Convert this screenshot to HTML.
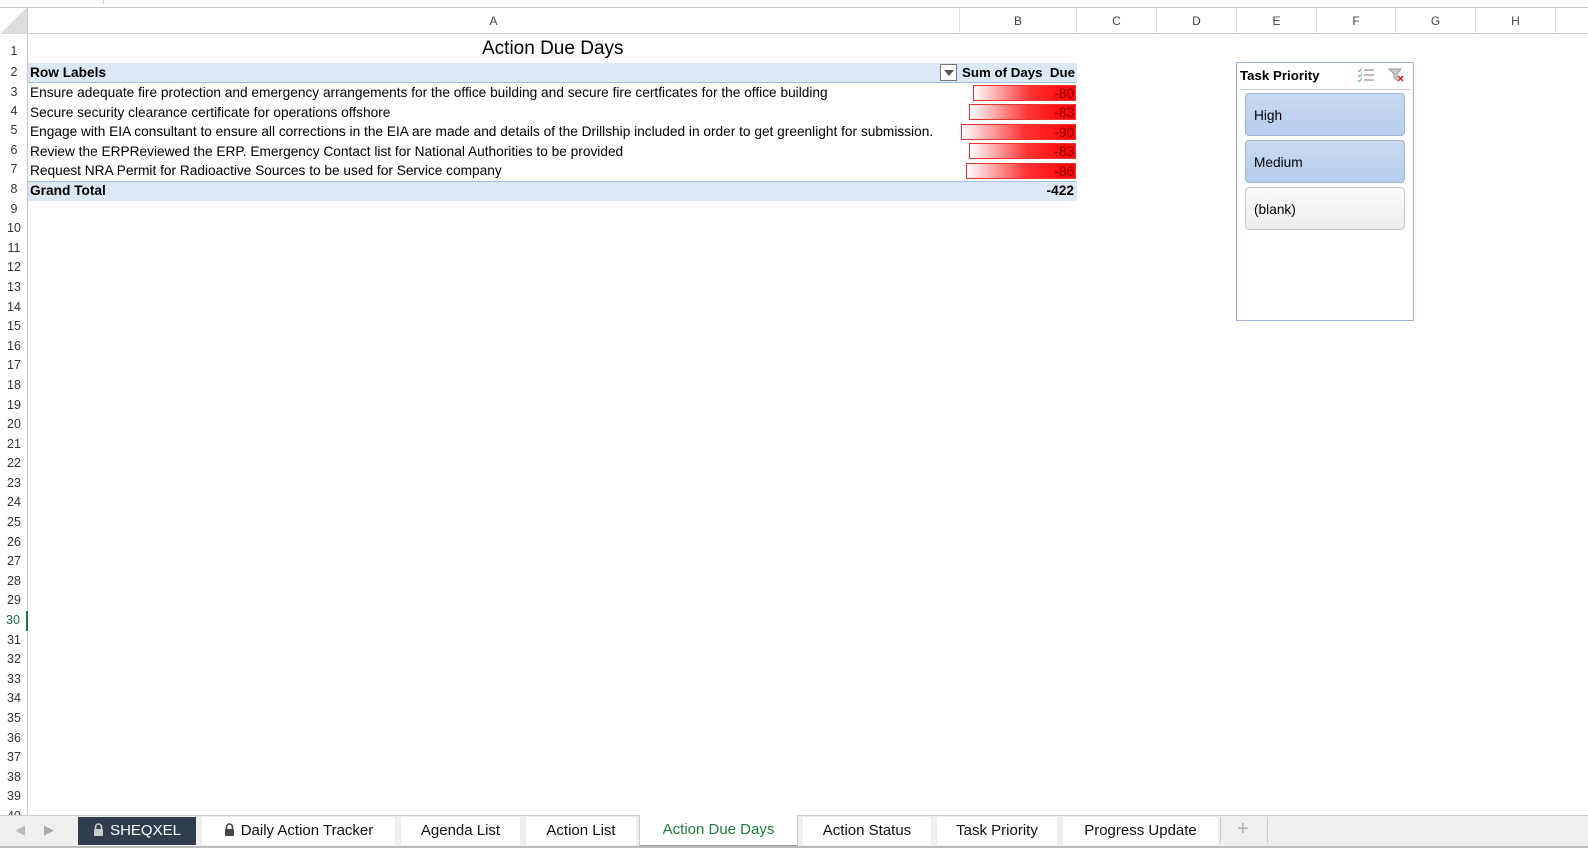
<!DOCTYPE html>
<html><head><meta charset="utf-8"><style>
*{margin:0;padding:0;box-sizing:border-box}
body{width:1588px;height:860px;overflow:hidden;background:#fff;font-family:"Liberation Sans",sans-serif;position:relative;font-size:13px;color:#000}
.a{position:absolute}
.top{left:0;top:0;width:1588px;height:8px;background:#fff;border-bottom:1px solid #c8c8c8}
.colh{top:8px;height:26px;border-bottom:1px solid #c8c8c8;background:#fff}
.ch{position:absolute;top:8px;height:26px;border-right:1px solid #dcdcdc;text-align:center;font-size:12px;line-height:26px;color:#444}
.rn{left:0;width:28px;border-right:1px solid #c8c8c8;top:34px;height:781px}
.rn div{height:19.6px;line-height:19.6px;text-align:center;font-size:12.5px;color:#333;width:28px}
.cell{position:absolute;left:30px;font-size:13.7px;white-space:nowrap}
.bar{position:absolute;height:16px;border:1px solid #e33;background:linear-gradient(to right,#fff,#f33 55%,#f00);text-align:right;color:#800;font-size:13.5px;line-height:15px;padding-right:1px}
.tabs{left:0;top:815px;width:1588px;height:33px;background:#efefef;border-top:1px solid #ccc;border-bottom:2px solid #bbb}
.tab{position:absolute;top:2px;height:28px;background:#fff;font-size:15px;line-height:28px;text-align:center;color:#111}
.sl{position:absolute;left:1245px;width:160px;height:43px;border:1px solid #9fb4cf;border-radius:4px;background:linear-gradient(#c9daf0,#b6cdee);font-size:13.7px;line-height:43px;padding-left:8px}
.lk{display:inline-block;vertical-align:-1px;margin-right:6px}
</style></head><body>
<div class="a top"></div>
<div class="a" style="left:0;top:0;width:104px;height:4px;border-right:1px solid #ccc"></div>
<div class="a colh" style="left:0;width:1588px"></div>
<div class="a" style="left:0;top:8px;width:28px;height:26px;border-right:1px solid #c8c8c8;background:linear-gradient(135deg,#fff 50%,#ddd 50%)"></div>
<div class="ch" style="left:28px;width:932px">A</div>
<div class="ch" style="left:960px;width:117px">B</div>
<div class="ch" style="left:1077px;width:80px">C</div>
<div class="ch" style="left:1157px;width:80px">D</div>
<div class="ch" style="left:1237px;width:80px">E</div>
<div class="ch" style="left:1317px;width:79px">F</div>
<div class="ch" style="left:1396px;width:80px">G</div>
<div class="ch" style="left:1476px;width:80px">H</div>
<div class="a rn">
<div style="height:29px;line-height:34px">1</div><div>2</div><div style="height:19px">3</div><div>4</div><div>5</div><div>6</div><div>7</div><div>8</div><div>9</div><div>10</div><div>11</div><div>12</div><div>13</div><div>14</div><div>15</div><div>16</div><div>17</div><div>18</div><div>19</div><div>20</div><div>21</div><div>22</div><div>23</div><div>24</div><div>25</div><div>26</div><div>27</div><div>28</div><div>29</div><div style="color:#1e7145;border-right:2px solid #1e7145;width:28px">30</div><div>31</div><div>32</div><div>33</div><div>34</div><div>35</div><div>36</div><div>37</div><div>38</div><div>39</div><div>40</div>
</div>
<div class="a" style="left:482px;top:38px;font-size:19px">Action Due Days</div>
<div class="a" style="left:28px;top:63px;width:1049px;height:20px;background:#dde8f6;border-bottom:1px solid #9ec0e6"></div>
<div class="cell" style="top:65px;font-weight:bold">Row Labels</div>
<div class="a" style="left:940px;top:64px;width:17px;height:17px;border:1px solid #777;background:#fff"><div style="margin:5px auto 0;width:0;height:0;border-left:5px solid transparent;border-right:5px solid transparent;border-top:6px solid #555"></div></div>
<div class="a" style="left:962px;top:65px;font-weight:bold;font-size:13.3px">Sum of Days&nbsp; Due</div>
<div class="cell" style="top:85px">Ensure adequate fire protection and emergency arrangements for the office building and secure fire certficates for the office building</div>
<div class="cell" style="top:105px">Secure security clearance certificate for operations offshore</div>
<div class="cell" style="top:124px">Engage with EIA consultant to ensure all corrections in the EIA are made and details of the Drillship included in order to get greenlight for submission.</div>
<div class="cell" style="top:144px">Review the ERPReviewed the ERP. Emergency Contact list for National Authorities to be provided</div>
<div class="cell" style="top:163px">Request NRA Permit for Radioactive Sources to be used for Service company</div>
<div class="bar" style="left:973px;width:103px;top:85px">-80</div>
<div class="bar" style="left:969px;width:107px;top:104px">-83</div>
<div class="bar" style="left:961px;width:115px;top:124px">-90</div>
<div class="bar" style="left:969px;width:107px;top:143px">-83</div>
<div class="bar" style="left:966px;width:110px;top:163px">-86</div>
<div class="a" style="left:28px;top:181px;width:1049px;height:20px;background:#dde8f6;border-top:1px solid #9ec0e6"></div>
<div class="cell" style="top:183px;font-weight:bold">Grand Total</div>
<div class="a" style="left:1036px;top:183px;width:38px;text-align:right;font-weight:bold;font-size:13.7px">-422</div>
<div class="a" style="left:1236px;top:62px;width:178px;height:259px;border:1px solid #9fb4d8;background:#fff"></div>
<div class="a" style="left:1240px;top:68px;font-weight:bold;font-size:13.3px">Task Priority</div>
<svg class="a" style="left:1357px;top:68px" width="18" height="14" viewBox="0 0 18 14"><path d="M1 2l1.5 1.5L5 0.5M1 7l1.5 1.5L5 5.5M1 12l1.5 1.5L5 10.5" stroke="#6b6" fill="none"/><path d="M7 2h10M7 7h10M7 12h10" stroke="#777"/></svg>
<svg class="a" style="left:1388px;top:68px" width="18" height="14" viewBox="0 0 18 14"><path d="M1 1h12L9 6v6L6 10V6z" fill="#ccc" stroke="#999"/><path d="M10 8l5 5M15 8l-5 5" stroke="#d22" stroke-width="1.5"/></svg>
<div class="a" style="left:1240px;top:89px;width:170px;height:1px;background:#ccc"></div>
<div class="sl" style="top:93px">High</div>
<div class="sl" style="top:140px">Medium</div>
<div class="sl" style="top:187px;background:linear-gradient(#fafafa,#ececec);border-color:#ccc">(blank)</div>
<div class="a tabs"></div>
<div class="a" style="left:15px;top:822px;color:#bbb;font-size:13px">◀</div>
<div class="a" style="left:44px;top:822px;color:#aaa;font-size:13px">▶</div>
<div class="tab" style="left:78px;top:817px;width:118px;background:#2f3d4f;color:#fff"><svg class="lk" width="11" height="13" viewBox="0 0 11 13"><path d="M2.5 6V4a3 3 0 0 1 6 0v2" stroke="#ccc" stroke-width="1.6" fill="none"/><rect x="1" y="6" width="9" height="7" rx="1" fill="#ccc"/></svg>SHEQXEL</div>
<div class="tab" style="left:202px;top:817px;width:193px"><svg class="lk" width="11" height="13" viewBox="0 0 11 13"><path d="M2.5 6V4a3 3 0 0 1 6 0v2" stroke="#444" stroke-width="1.6" fill="none"/><rect x="1" y="6" width="9" height="7" rx="1" fill="#444"/></svg>Daily Action Tracker</div>
<div class="tab" style="left:401px;top:817px;width:119px">Agenda List</div>
<div class="tab" style="left:526px;top:817px;width:110px">Action List</div>
<div class="tab" style="left:639px;top:815px;width:159px;height:31px;line-height:30px;color:#1e7b3e;border-bottom:1px solid #999;border-left:1px solid #ccc;border-right:1px solid #ccc">Action Due Days</div>
<div class="tab" style="left:803px;top:817px;width:128px">Action Status</div>
<div class="tab" style="left:937px;top:817px;width:120px">Task Priority</div>
<div class="tab" style="left:1063px;top:817px;width:155px">Progress Update</div>
<div class="a" style="left:1237px;top:818px;color:#aaa;font-size:20px">+</div>
<div class="a" style="left:1220px;top:817px;width:1px;height:26px;background:#ccc"></div>
<div class="a" style="left:1267px;top:817px;width:1px;height:26px;background:#ccc"></div>
</body></html>
